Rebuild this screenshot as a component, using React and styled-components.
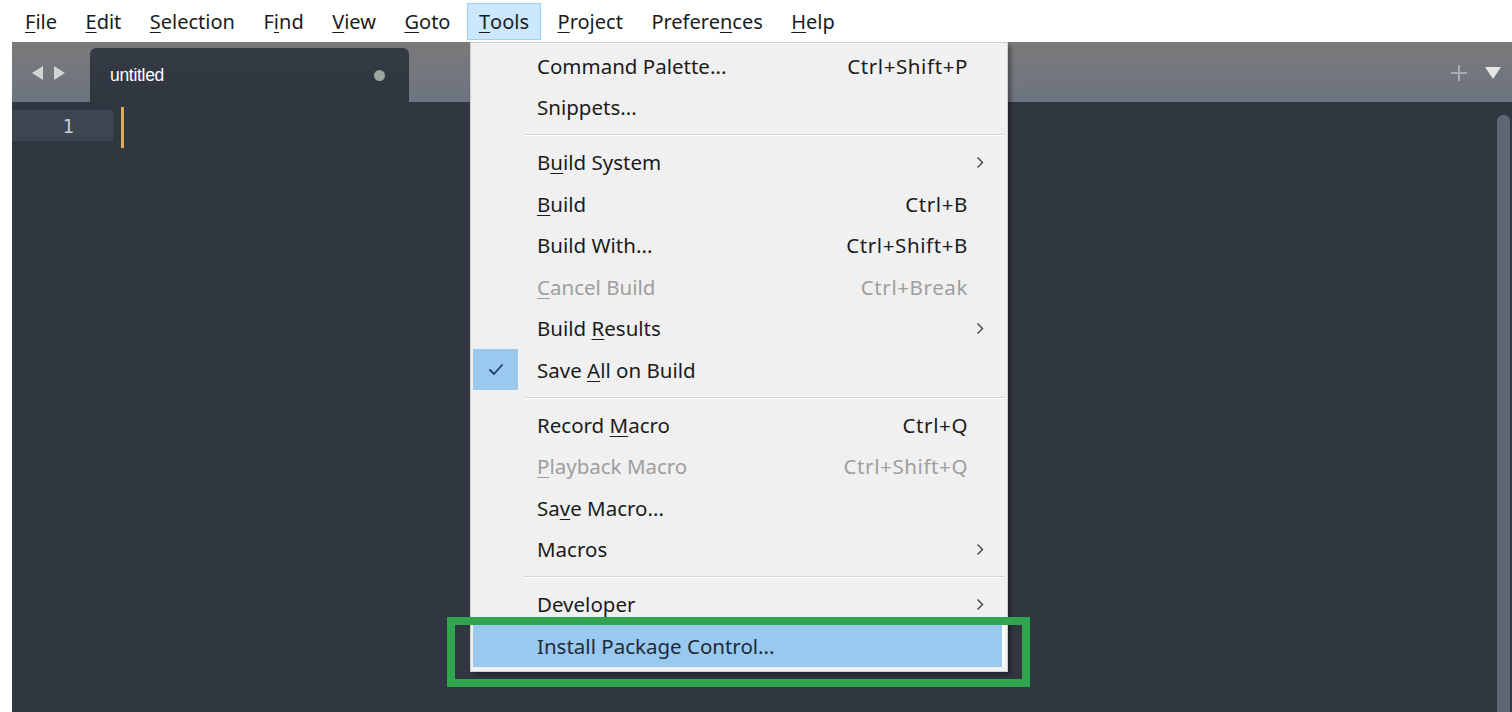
import React from 'react';
import styled, { createGlobalStyle } from 'styled-components';

const GlobalStyle = createGlobalStyle`
  html, body { margin: 0; padding: 0; background: #ffffff; }
  body { font-family: "Noto Sans", "Open Sans", sans-serif; overflow: hidden; }
`;

const Page = styled.div`
  position: relative;
  width: 1512px;
  height: 712px;
  display: flex;
  flex-direction: column;
  background: #ffffff;
`;

const MenuBar = styled.div`
  height: 42px;
  display: flex;
  align-items: center;
  padding-left: 13px;
  background: #ffffff;
`;

const MenuBarItem = styled.div`
  height: 37px;
  display: flex;
  align-items: center;
  padding: 0 11px;
  margin-right: 4.5px;
  font-size: 20px;
  color: #1b1b1b;
  box-sizing: border-box;
  border: 1px solid ${p => (p.$open ? '#99d1ff' : 'transparent')};
  background: ${p => (p.$open ? '#cce8ff' : 'transparent')};
  u { text-decoration-thickness: 1px; text-underline-offset: 3px; }
`;

const Window = styled.div`
  flex: 1;
  margin-left: 12px;
  display: flex;
  flex-direction: column;
`;

const TabBar = styled.div`
  height: 60px;
  display: flex;
  align-items: flex-end;
  background: linear-gradient(#7a7a7a, #6d7480);
  box-sizing: border-box;
`;

const NavArrows = styled.div`
  width: 78px;
  align-self: center;
  display: flex;
  gap: 9px;
  padding-left: 19px;
  padding-top: 2px;
  box-sizing: border-box;
`;

const Tab = styled.div`
  width: 319px;
  height: 54px;
  background: linear-gradient(#343b45, #2f3640);
  border-radius: 6px 6px 0 0;
  display: flex;
  align-items: center;
  justify-content: space-between;
  padding: 0 24px 0 20px;
  box-sizing: border-box;
  color: #ffffff;
  font-family: "Liberation Sans", Arial, sans-serif;
  font-size: 17.5px;
  letter-spacing: -0.3px;
`;

const Dot = styled.span`
  width: 11px;
  height: 11px;
  border-radius: 50%;
  background: #9aa79d;
`;

const TabTools = styled.div`
  margin-left: auto;
  align-self: center;
  display: flex;
  align-items: center;
  gap: 16px;
  padding-right: 10px;
  padding-top: 2px;
`;

const Editor = styled.div`
  flex: 1;
  background: #303741;
  display: flex;
  padding-top: 5px;
  box-sizing: border-box;
`;

const Gutter = styled.div`
  width: 101px;
  height: 31px;
  margin-top: 3px;
  background: #3c4550;
  color: #c5ccd3;
  font-family: "DejaVu Sans Mono", monospace;
  font-size: 19px;
  display: flex;
  align-items: center;
  justify-content: flex-end;
  padding-right: 39px;
  box-sizing: border-box;
`;

const Caret = styled.div`
  width: 3px;
  height: 41px;
  margin-left: 8px;
  background: #e5a95a;
`;

const Scrollbar = styled.div`
  margin-left: auto;
  margin-right: 2px;
  margin-top: 8px;
  width: 13px;
  border-radius: 6px 6px 0 0;
  background: #5f6772;
`;

const Dropdown = styled.div`
  position: absolute;
  left: 470px;
  top: 42px;
  width: 538px;
  background: #f0f0f0;
  border: 1px solid #cfcfcf;
  box-shadow: 3px 3px 4px rgba(0, 0, 0, 0.35);
  padding: 2px 2px 4px 2px;
  box-sizing: border-box;
  font-size: 20.5px;
  color: #1b1b1b;
`;

const Row = styled.div`
  height: 41.5px;
  display: grid;
  grid-template-columns: 45px 1fr auto 37px;
  align-items: center;
  background: ${p => (p.$active ? '#99c9ef' : 'transparent')};
  color: ${p => (p.$disabled ? '#9e9e9e' : p.$active ? '#1c2a3a' : '#1b1b1b')};
  border-right: ${p => (p.$active ? '3px solid #ffffff' : '0')};
  u { text-decoration-thickness: 1px; text-underline-offset: 3px; }
`;

const CheckCell = styled.div`
  height: 41px;
  display: flex;
  align-items: center;
  justify-content: center;
  background: ${p => (p.$on ? '#99c9ef' : 'transparent')};
`;

const Label = styled.span`
  padding-left: 19px;
  white-space: nowrap;
`;

const Shortcut = styled.span`
  white-space: nowrap;
  letter-spacing: 0.6px;
`;

const Arrow = styled.div`
  display: flex;
  justify-content: flex-start;
  padding-left: 8px;
`;

const Separator = styled.div`
  height: 1px;
  margin: 6px 0 5.5px 51px;
  background: #d5d5d5;
  border-bottom: 1px solid #ffffff;
`;

const Highlight = styled.div`
  position: absolute;
  left: 447px;
  top: 617px;
  width: 583px;
  height: 70px;
  border: 8px solid #2fa64e;
  box-sizing: border-box;
`;

const Chevron = ({ color = '#404040' }) => (
  <svg width="8" height="13" viewBox="0 0 8 13">
    <path d="M1.5 1.5 L6.5 6.5 L1.5 11.5" fill="none" stroke={color} strokeWidth="1.4" />
  </svg>
);

const menuItems = [
  { label: 'Command Palette...', key: 'Ctrl+Shift+P' },
  { label: 'Snippets...' },
  'sep',
  { label: <>B<u>u</u>ild System</>, sub: true },
  { label: <><u>B</u>uild</>, key: 'Ctrl+B' },
  { label: 'Build With...', key: 'Ctrl+Shift+B' },
  { label: <><u>C</u>ancel Build</>, key: 'Ctrl+Break', disabled: true },
  { label: <>Build <u>R</u>esults</>, sub: true },
  { label: <>Save <u>A</u>ll on Build</>, checked: true },
  'sep',
  { label: <>Record <u>M</u>acro</>, key: 'Ctrl+Q' },
  { label: <><u>P</u>layback Macro</>, key: 'Ctrl+Shift+Q', disabled: true },
  { label: <>Sa<u>v</u>e Macro...</> },
  { label: 'Macros', sub: true },
  'sep',
  { label: 'Developer', sub: true },
  { label: 'Install Package Control...', active: true },
];

const topMenus = [
  [<><u>F</u>ile</>],
  [<><u>E</u>dit</>],
  [<><u>S</u>election</>],
  [<>F<u>i</u>nd</>],
  [<><u>V</u>iew</>],
  [<><u>G</u>oto</>],
  [<><u>T</u>ools</>, true],
  [<><u>P</u>roject</>],
  [<>Prefere<u>n</u>ces</>],
  [<><u>H</u>elp</>],
];

export default function App() {
  return (
    <Page>
      <GlobalStyle />
      <MenuBar>
        {topMenus.map(([label, open], i) => (
          <MenuBarItem key={i} $open={open}>{label}</MenuBarItem>
        ))}
      </MenuBar>
      <Window>
        <TabBar>
          <NavArrows>
            <svg width="13" height="16" viewBox="0 0 13 16"><path d="M12 1 L1 8 L12 15 Z" fill="#d4d4d4" /></svg>
            <svg width="13" height="16" viewBox="0 0 13 16"><path d="M1 1 L12 8 L1 15 Z" fill="#d4d4d4" /></svg>
          </NavArrows>
          <Tab>
            <span>untitled</span>
            <Dot />
          </Tab>
          <TabTools>
            <svg width="18" height="18" viewBox="0 0 18 18">
              <path d="M9 1 V17 M1 9 H17" stroke="#a9adb3" strokeWidth="2" />
            </svg>
            <svg width="18" height="14" viewBox="0 0 18 14"><path d="M1 1 H17 L9 13 Z" fill="#e6e6e6" /></svg>
          </TabTools>
        </TabBar>
        <Editor>
          <Gutter>1</Gutter>
          <Caret />
          <Scrollbar />
        </Editor>
      </Window>

      <Dropdown>
        {menuItems.map((item, i) =>
          item === 'sep' ? (
            <Separator key={i} />
          ) : (
            <Row key={i} $disabled={item.disabled} $active={item.active}>
              <CheckCell $on={item.checked}>
                {item.checked && (
                  <svg width="16" height="13" viewBox="0 0 16 13">
                    <path d="M1.5 6.5 L6 11 L14.5 1.5" fill="none" stroke="#1d3d6b" strokeWidth="1.8" />
                  </svg>
                )}
              </CheckCell>
              <Label>{item.label}</Label>
              <Shortcut>{item.key}</Shortcut>
              <Arrow>{item.sub && <Chevron />}</Arrow>
            </Row>
          )
        )}
      </Dropdown>
      <Highlight />
    </Page>
  );
}
